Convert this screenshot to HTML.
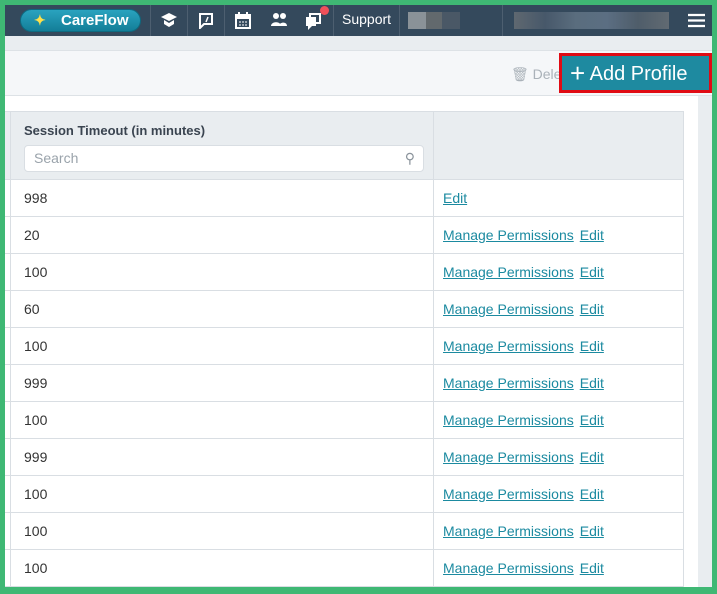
<!DOCTYPE html><html><head><style>
*{box-sizing:border-box;margin:0;padding:0}
body{width:717px;height:594px;background:#3fb874;position:relative;overflow:hidden;font-family:"Liberation Sans",sans-serif;font-size:14px;color:#333}
#app{position:absolute;left:5px;top:5px;width:707px;height:582px;background:#e9edf0;overflow:hidden}
.nav{position:absolute;left:0;top:0;width:707px;height:31px;background:#34495c;color:#fff}
.logo{position:absolute;left:15px;top:4px;width:121px;height:23px;border-radius:12px;background:linear-gradient(#2aa3bf,#137e98);border:1px solid #0d6a80;color:#fff;font-weight:bold;font-size:15px;line-height:21px;padding-left:40px}
.sep{position:absolute;top:0;width:1px;height:31px;background:#4d5f70}
.ic{position:absolute;top:7px}
.panel{position:absolute;left:0;top:45px;width:707px;height:46px;background:#f5f7f9;border-top:1px solid #dde2e6;border-bottom:1px solid #dde2e6}
.main{position:absolute;left:0;top:91px;width:693px;height:500px;background:#fff}
table{position:absolute;left:-1px;top:15px;border-collapse:collapse;width:680px;table-layout:fixed}
td,th{border:1px solid #d9dee3;height:37px;padding:0 9px 0 13px;text-align:left;font-size:14px;color:#333;font-weight:normal;white-space:nowrap;overflow:hidden}
th{background:#e9edf0;height:68px;vertical-align:top;padding-top:11px;font-weight:bold;font-size:13px;color:#3a4450}
td:nth-child(3){padding-left:9px}
td:first-child,th:first-child{padding:0}
a{color:#1b8aa0;text-decoration:underline;margin-right:6px}
.search{margin-top:7px;height:27px;border:1px solid #d9dee3;border-radius:4px;background:#fff;color:#9aa3ab;font-weight:normal;font-size:14px;line-height:25px;padding-left:9px;position:relative}
</style></head><body><div id="app">
<div class="nav">
<div class="logo"><span style="position:absolute;left:13px;top:0;color:#ffe04a;font-size:14px">✦</span>CareFlow</div>
<div class="sep" style="left:145px"></div><div class="sep" style="left:182px"></div><div class="sep" style="left:219px"></div><div class="sep" style="left:328px"></div><div class="sep" style="left:394px"></div><div class="sep" style="left:497px"></div>
<svg class="ic" style="left:155px" width="18" height="17" viewBox="0 0 18 17"><path d="M9 1L1 5l8 4 8-4z M4 8v4l5 3 5-3V8l-5 3z" fill="#fff"/></svg>
<svg class="ic" style="left:193px" width="16" height="17" viewBox="0 0 16 17"><path d="M2 2h12v10H6l-4 4z" fill="none" stroke="#fff" stroke-width="2"/><path d="M8 10l2-5" stroke="#fff" stroke-width="1.5"/></svg>
<svg class="ic" style="left:230px" width="16" height="17" viewBox="0 0 16 17"><rect x="1" y="3" width="14" height="13" fill="none" stroke="#fff" stroke-width="2"/><rect x="1" y="3" width="14" height="4" fill="#fff"/><path d="M4 0v4M12 0v4" stroke="#fff" stroke-width="2"/><path d="M4 10h8M4 13h8" stroke="#fff" stroke-dasharray="2 1"/></svg>
<svg class="ic" style="left:265px" width="18" height="16" viewBox="0 0 18 16"><circle cx="6" cy="4" r="3" fill="#fff"/><circle cx="13" cy="4" r="3" fill="#fff"/><path d="M1 14c0-5 10-5 10 0zM9 14c0-4 8-5 8 0z" fill="#fff"/></svg>
<svg class="ic" style="left:300px" width="18" height="18" viewBox="0 0 18 18"><rect x="1" y="5" width="10" height="9" fill="#fff"/><path d="M3 14v4l4-4z" fill="#fff"/><rect x="5" y="2" width="10" height="9" fill="none" stroke="#fff" stroke-width="2"/></svg>
<div style="position:absolute;left:315px;top:1px;width:9px;height:9px;border-radius:50%;background:#f0505a"></div>
<div style="position:absolute;left:337px;top:6px;font-size:14px">Support</div>
<div style="position:absolute;left:403px;top:7px;width:52px;height:17px;background:linear-gradient(90deg,#8a9298 0 35%,#62696d 35% 65%,#4a5866 65%)"></div>
<div style="position:absolute;left:509px;top:7px;width:155px;height:17px;background:linear-gradient(90deg,#5f6870,#47586a,#5a6d7e,#5b6e82,#4f5d6a,#616a72)"></div>
<svg style="position:absolute;left:683px;top:8px" width="17" height="15"><path d="M0 2h17M0 7.5h17M0 13h17" stroke="#fff" stroke-width="2.2"/></svg>
</div>
<div class="panel">
<div style="position:absolute;left:506px;top:15px;color:#aab2b9;font-size:14px">🗑 Delet</div>
<div style="position:absolute;left:554px;top:2px;width:153px;height:40px;background:#e00b14;padding:3px"><div style="background:#1e8aa0;height:34px;color:#fff;font-size:20px;line-height:34px;padding-left:8px"><span style="font-size:26px;vertical-align:-2px">+</span> Add Profile</div></div>
</div>
<div class="main">
<table>
<colgroup><col style="width:6px"><col style="width:423px"><col></colgroup>
<tr><th></th><th>Session Timeout (in minutes)<div class="search">Search<span style="position:absolute;right:8px;top:0;color:#8b949c">⚲</span></div></th><th></th></tr>
<tr><td></td><td>998</td><td><a>Edit</a></td></tr>
<tr><td></td><td>20</td><td><a>Manage Permissions</a><a>Edit</a></td></tr>
<tr><td></td><td>100</td><td><a>Manage Permissions</a><a>Edit</a></td></tr>
<tr><td></td><td>60</td><td><a>Manage Permissions</a><a>Edit</a></td></tr>
<tr><td></td><td>100</td><td><a>Manage Permissions</a><a>Edit</a></td></tr>
<tr><td></td><td>999</td><td><a>Manage Permissions</a><a>Edit</a></td></tr>
<tr><td></td><td>100</td><td><a>Manage Permissions</a><a>Edit</a></td></tr>
<tr><td></td><td>999</td><td><a>Manage Permissions</a><a>Edit</a></td></tr>
<tr><td></td><td>100</td><td><a>Manage Permissions</a><a>Edit</a></td></tr>
<tr><td></td><td>100</td><td><a>Manage Permissions</a><a>Edit</a></td></tr>
<tr><td></td><td>100</td><td><a>Manage Permissions</a><a>Edit</a></td></tr>
</table>
</div>
</div></body></html>
